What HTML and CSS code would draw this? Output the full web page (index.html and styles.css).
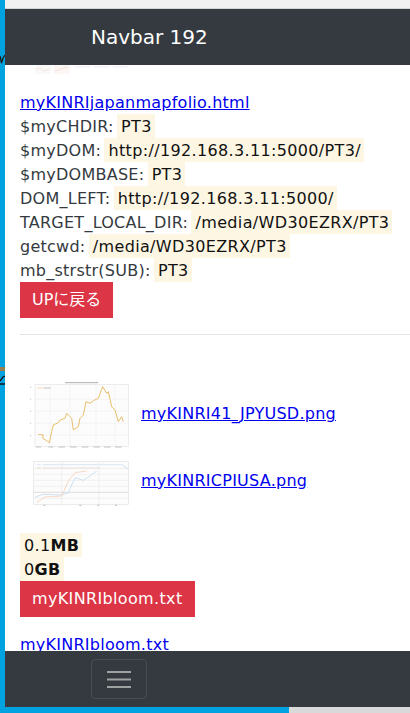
FILE: index.html
```html
<!DOCTYPE html>
<html lang="ja">
<head>
<meta charset="utf-8">
<title>Navbar 192</title>
<link rel="stylesheet" href="styles.css">
</head>
<body>
<div class="window">
  <div class="chrome-top"></div>
  <header class="navbar navbar-top"><span class="brand">Navbar 192</span></header>
  <main class="content">
    <div class="peek">
      <svg class="peek-svg" width="100" height="10" viewBox="0 0 100 10">
        <rect x="0" y="0" width="16" height="9" fill="#fbf9f8"/><rect x="19" y="0" width="16" height="9" fill="#fcf6f4"/>
        <path d="M1 5L5 3 9 6 14 4" stroke="#eee6e3" fill="none"/><path d="M20 6L24 5 28 3 33 2" stroke="#f5e0da" fill="none"/>
        <path d="M40 2H55M59 2H74M78 2H93" stroke="#f6f6f8" stroke-width="2"/>
      </svg>
    </div>
    <div class="info">
      <div><a href="#">myKINRIjapanmapfolio.html</a></div>
      <div>$myCHDIR: <code>PT3</code></div>
      <div>$myDOM: <code>http://192.168.3.11:5000/PT3/</code></div>
      <div>$myDOMBASE: <code>PT3</code></div>
      <div>DOM_LEFT: <code>http://192.168.3.11:5000/</code></div>
      <div>TARGET_LOCAL_DIR: <code>/media/WD30EZRX/PT3</code></div>
      <div>getcwd: <code>/media/WD30EZRX/PT3</code></div>
      <div>mb_strstr(SUB): <code>PT3</code></div>
    </div>
    <button class="btn btn-up">UPに戻る</button>
    <hr class="rule">
    <div class="files">
      <div class="file file-a">
        <svg class="thumb thumb-a" viewBox="90 30 300 204">
          <rect x="90" y="30" width="300" height="204" fill="#fff"/>
          <rect x="105" y="43" width="280" height="187" fill="#fcfcfc" stroke="#e4e4e4" stroke-width="2"/>
          <path d="M150 43V230M210 43V230M288 43V230M345 43V230M105 88H385M105 124H385M105 160H385M105 196H385" stroke="#f0f0f0" stroke-width="2"/>
          <path d="M195 38H295" stroke="#bcbcbc" stroke-width="4"/>
          <path d="M113 54H128" stroke="#eccb84" stroke-width="2"/><path d="M131 54H152" stroke="#c4c4c4" stroke-width="3"/>
          <path d="M115 193L130 195 128 205 140 212 148 218 155 185 160 165 175 158 180 150 195 145 200 130 215 145 220 180 235 170 240 145 250 135 258 95 270 100 280 92 295 85 308 50 320 70 325 65 335 110 345 120 355 155 365 140 370 155" stroke="#e8bf6c" fill="none" stroke-width="3"/>
          <path d="M92 50v4M92 85v4M92 122v4M92 158v4M92 195v4" stroke="#c8c8c8" stroke-width="3"/>
          <path d="M108 231h15M145 231h15M175 231h20M210 231h20M245 231h20M280 231h20M312 231h20M345 231h20" stroke="#c4c4c4" stroke-width="3"/>
          <path d="M228 239h32" stroke="#bbb" stroke-width="3"/>
        </svg>
        <a href="#">myKINRI41_JPYUSD.png</a>
      </div>
      <div class="file file-b">
        <svg class="thumb thumb-b" viewBox="90 270 300 135">
          <rect x="90" y="270" width="300" height="135" fill="#fff"/>
          <rect x="100" y="272" width="285" height="128" fill="#fcfcfc" stroke="#e2e2e2" stroke-width="2"/>
          <path d="M100 292H385M100 310H385M100 328H385M100 346H385M100 382H385M185 272V400M296 272V400" stroke="#ebebeb" stroke-width="2"/>
          <path d="M100 364H385" stroke="#cfcfcf" stroke-width="2"/>
          <path d="M110 281H122M128 281H365" stroke="#dbe7f2" stroke-width="3"/>
          <path d="M110 291H122M128 291H300" stroke="#e6e0dc" stroke-width="3"/>
          <path d="M105 378L130 370 185 372 205 365 225 320 250 328 270 315 290 300M365 280L385 295" stroke="#c4dcf0" fill="none" stroke-width="2.500"/>
          <path d="M110 395L135 378 185 375 205 330 225 305 260 300" stroke="#f4d3bc" fill="none" stroke-width="2.500"/>
          <path d="M130 403h6M238 403h6M292 403h6M345 403h6" stroke="#bbb" stroke-width="3"/>
        </svg>
        <a href="#">myKINRICPIUSA.png</a>
      </div>
    </div>
    <div class="sizes">
      <div><code>0.1<b>MB</b></code></div>
      <div><code>0<b>GB</b></code></div>
    </div>
    <button class="btn btn-file">myKINRIbloom.txt</button>
    <div class="last"><a href="#">myKINRIbloom.txt</a></div>
  </main>
  <footer class="navbar navbar-bottom">
    <button class="toggler" aria-label="menu">
      <svg width="24" height="18" viewBox="0 0 24 18"><path d="M0 2H24M0 9.500H24M0 17H24" stroke="#9fa1a3" stroke-width="2"/></svg>
    </button>
  </footer>
  <div class="chrome-bottom"></div>
</div>
<svg class="desk-mark desk-mark-a" width="5" height="9" viewBox="0 0 5 9"><path d="M0 1L1.500 8 3 3 5 0" stroke="#1a1206" fill="none" stroke-width="1.200"/></svg>
<svg class="desk-mark desk-mark-b" width="5" height="18" viewBox="0 0 5 18"><path d="M0 1H5M0 3H5" stroke="#c9761e" stroke-width="1.500"/><path d="M0 14L3 10 5 9M0 17H5" stroke="#141414" stroke-width="1.300" fill="none"/></svg>
</body>
</html>
```
FILE: styles.css
```css
* { box-sizing: border-box; }
html, body { margin: 0; height: 100%; overflow: hidden; }
body {
  background: #00a2e0;
  font-family: "DejaVu Sans", "Noto Sans CJK JP", sans-serif;
  font-size: 16px;
  line-height: 24px;
  letter-spacing: .25px;
  color: #343a40;
  position: relative;
}
.window { height: 713px; margin-left: 5px; display: flex; flex-direction: column; }
.chrome-top { height: 9px; background: #f1f1f1; border-bottom: 1px solid #d6d6d6; flex: none; }
.navbar { background: #343a40; height: 56px; flex: none; display: flex; align-items: center; }
.navbar-top { padding-left: 86px; }
.brand { color: #fff; font-size: 20px; letter-spacing: 0; }
.content { flex: 1; min-height: 0; overflow: hidden; background: #fff; padding: 0 0 0 15px; }
.peek { height: 10px; padding-left: 15px; margin-bottom: 15px; }
.peek-svg { display: block; }
a { color: #0000ee; }
.info > div, .sizes > div { height: 24px; line-height: 25px; word-spacing: -2px; }
code {
  display: inline-block;
  height: 24px;
  line-height: 25px;
  vertical-align: top;
  font-family: inherit;
  font-size: 16px;
  letter-spacing: .35px;
  background: #fdf6e3;
  color: #111;
  padding: 0 3px 0 4px;
}
.btn { display: block; border: 0; background: #dc3545; color: #fff; font-family: inherit; font-size: 16px; line-height: 24px; letter-spacing: .35px; height: 36px; padding: 0 12px; }
.btn-up { letter-spacing: 0; }
.rule { border: 0; border-top: 1px solid #e4e4e4; margin: 16px 0 0 0; }
.files { padding-top: 45px; }
.file { display: flex; align-items: center; gap: 11px; padding-left: 10px; }
.file-b { margin-top: 13px; }
.file-b a { margin-bottom: 6px; }
.thumb { display: block; flex: none; width: 100px; }
.thumb-a { height: 68px; }
.thumb-b { height: 45px; }
.sizes { margin-top: 27px; }
.sizes b { font-weight: 700; }
.last { margin-top: 16px; }
.navbar-bottom { padding-left: 86px; }
.toggler { width: 56px; height: 40px; background: transparent; border: 1px solid #494e54; border-radius: 4px; display: flex; align-items: center; justify-content: center; padding: 0; }
.chrome-bottom { height: 6px; flex: none; background: linear-gradient(90deg, #00a2e0 70.500%, #d9d9d9 70.500%); margin-left: -5px; }
.desk-mark { position: absolute; left: 0; }
.desk-mark-a { top: 55px; }
.desk-mark-b { top: 367px; }
```
